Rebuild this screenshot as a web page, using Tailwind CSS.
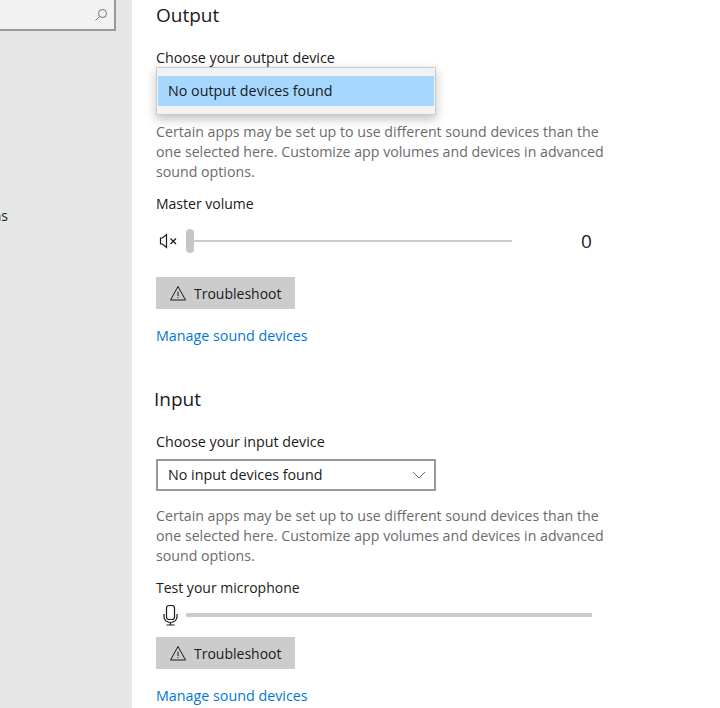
<!DOCTYPE html>
<html lang="en">
  <head>
    <meta charset="UTF-8" />
    <title>Sound settings</title>
    <script src="https://cdn.jsdelivr.net/npm/@tailwindcss/browser@4"></script>
  </head>
  <body class="bg-white overflow-hidden font-['Open_Sans',sans-serif] text-[14px] text-[#1a1a1a]">
    <div class="flex w-[720px] h-[708px] overflow-hidden">
      <!-- Sidebar -->
      <aside class="w-[132px] h-full shrink-0 bg-[#e6e6e6] flex flex-col">
        <div class="w-[116px] h-[31px] flex items-center justify-end pr-[6px] bg-[#f2f2f2] border-2 border-l-0 border-t-0 border-[#999999]">
          <svg width="14" height="14" viewBox="0 0 14 14" fill="none" stroke="#707070" stroke-width="1">
            <circle cx="8.5" cy="5.5" r="4" />
            <path d="M5.5 8.5 L1.5 12.5" />
          </svg>
        </div>
        <div class="mt-[175px] h-[20px] leading-[20px] flex justify-end w-[8px] overflow-hidden"><span>ns</span></div>
      </aside>

      <!-- Main -->
      <main class="relative flex-1 pl-[24px] w-[588px]">
        <h2 class="h-[31px] text-[19px] leading-[31px] mb-[17px]">Output</h2>
        <div class="h-[20px] leading-[20px] text-[14.3px]">Choose your output device</div>

        <!-- open dropdown -->
        <div class="absolute left-[24px] top-[67px] w-[280px] h-[48px] py-[8px] px-[1px] bg-[#f2f2f2] border border-[#cccccc] shadow-[0_4px_10px_rgba(0,0,0,0.25)]">
          <div class="h-[30px] leading-[30px] pl-[10px] bg-[#a6d8ff] text-[14.3px]">No output devices found</div>
        </div>

        <div class="mt-[54px] w-[470px] leading-[20px] text-[14.2px] text-[#6b6b6b]">
          Certain apps may be set up to use different sound devices than the<br />one selected here. Customize app volumes and devices in advanced<br />sound options.
        </div>
        <div class="mt-[12px] h-[20px] leading-[20px]">Master volume</div>

        <div class="mt-[13px] h-[28px] flex items-center">
          <svg class="ml-[3px]" width="18" height="16" viewBox="0 0 18 16" fill="none" stroke="#1a1a1a" stroke-width="1.2">
            <path d="M1.5 5 H3.5 L7.5 1.5 V14.5 L3.5 11 H1.5 Z" />
            <path d="M11.5 5.5 L17 11 M17 5.5 L11.5 11" />
          </svg>
          <div class="relative ml-[9px] w-[326px] h-[2px] bg-[#cccccc]">
            <div class="absolute left-0 top-[-11px] w-[8px] h-[24px] rounded-full bg-[#c6c6c6]"></div>
          </div>
          <span class="ml-[69px] text-[19px] leading-[28px]">0</span>
        </div>

        <div class="mt-[22px] w-[139px] h-[32px] bg-[#cccccc] flex items-center pl-[14px]">
          <svg width="16" height="16" viewBox="0 0 16 16" fill="none" stroke="#1a1a1a" stroke-width="1">
            <path d="M8 1.5 L15.5 15 H0.5 Z" />
            <path d="M8 6.5 V11 M8 12 V13" />
          </svg>
          <span class="ml-[8px]">Troubleshoot</span>
        </div>

        <a class="block mt-[17px] h-[20px] leading-[20px] text-[14.3px] text-[#0078d7]">Manage sound devices</a>

        <h2 class="mt-[38px] -ml-[2px] h-[31px] text-[19px] leading-[31px]">Input</h2>
        <div class="mt-[17px] h-[20px] leading-[20px] text-[14.3px]">Choose your input device</div>

        <div class="mt-[7px] w-[280px] h-[32px] border-2 border-[#999999] flex items-center justify-between pl-[10px] pr-[8px]">
          <span class="text-[14.3px]">No input devices found</span>
          <svg width="14" height="8" viewBox="0 0 14 8" fill="none" stroke="#666666" stroke-width="1">
            <path d="M1 1 L7 7 L13 1" />
          </svg>
        </div>

        <div class="mt-[15px] w-[470px] leading-[20px] text-[14.2px] text-[#6b6b6b]">
          Certain apps may be set up to use different sound devices than the<br />one selected here. Customize app volumes and devices in advanced<br />sound options.
        </div>
        <div class="mt-[12px] h-[20px] leading-[20px]">Test your microphone</div>

        <div class="mt-[5px] h-[24px] flex items-center">
          <svg class="ml-[6px]" width="17" height="22" viewBox="0 0 17 22" fill="none" stroke="#1a1a1a" stroke-width="1.2">
            <rect x="4.5" y="1.5" width="8" height="14" rx="2.5" />
            <path d="M2 10 V13 A6.5 5.5 0 0 0 15 13 V10 M8.5 18.5 V21 M4.5 21 H12.5" />
          </svg>
          <div class="ml-[7px] w-[406px] h-[4px] bg-[#cccccc]"></div>
        </div>

        <div class="mt-[10px] w-[139px] h-[32px] bg-[#cccccc] flex items-center pl-[14px]">
          <svg width="16" height="16" viewBox="0 0 16 16" fill="none" stroke="#1a1a1a" stroke-width="1">
            <path d="M8 1.5 L15.5 15 H0.5 Z" />
            <path d="M8 6.5 V11 M8 12 V13" />
          </svg>
          <span class="ml-[8px]">Troubleshoot</span>
        </div>

        <a class="block mt-[17px] h-[20px] leading-[20px] text-[14.3px] text-[#0078d7]">Manage sound devices</a>
      </main>
    </div>
  </body>
</html>
